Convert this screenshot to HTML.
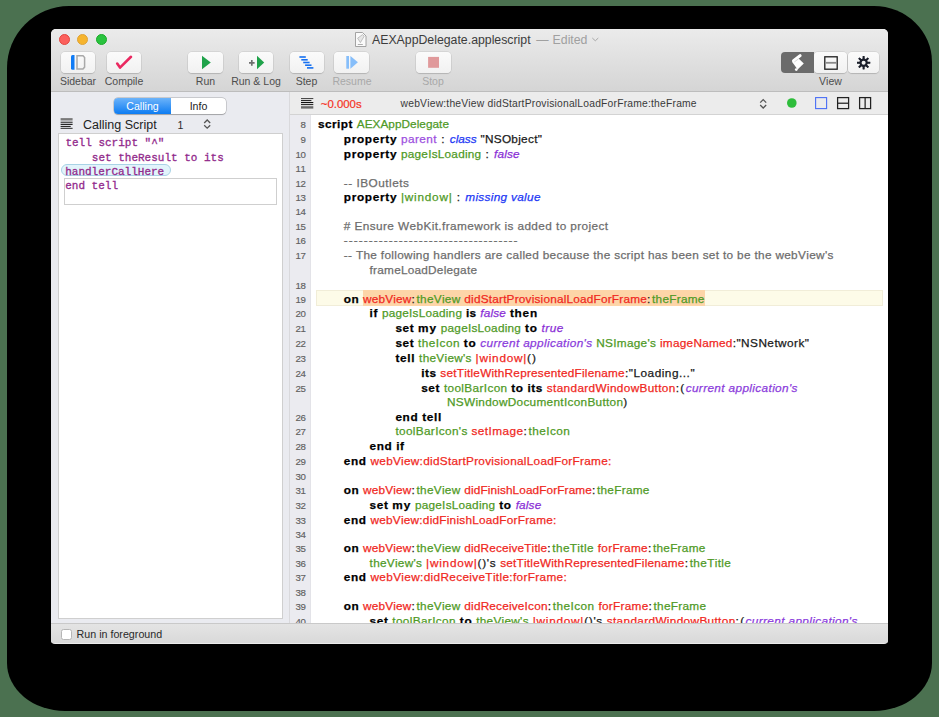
<!DOCTYPE html>
<html><head><meta charset="utf-8"><style>
*{margin:0;padding:0;box-sizing:border-box}
html,body{width:939px;height:717px;overflow:hidden;background:#4b7150;font-family:"Liberation Sans",sans-serif;font-kerning:none}
.abs{position:absolute}
#shadow{position:absolute;left:7px;top:6px;width:925px;height:705px;border-radius:62px 58px 58px 58px / 62px 56px 48px 48px;background:#000}
#win{position:absolute;left:51px;top:29px;width:837px;height:615px;border-radius:5px 5px 4px 4px;overflow:hidden;background:#ececec}
#toolbar{position:absolute;left:0;top:0;width:837px;height:63px;background:linear-gradient(#ebebeb,#d5d5d5);border-bottom:1px solid #bdbdbd}
.light{position:absolute;top:5.1px;width:11px;height:11px;border-radius:50%}
.tb{position:absolute;background:linear-gradient(#fbfbfb,#f1f1f1);border-radius:4px;box-shadow:0 0 0 0.5px rgba(0,0,0,0.12),0 1px 1px rgba(0,0,0,0.12)}
.lbl{position:absolute;width:100px;text-align:center;font-size:10.5px;white-space:nowrap}
#sidebar{position:absolute;left:0;top:63px;width:239px;height:531px;background:#eaebf0;border-right:1px solid #d9d9dc}
#editor{position:absolute;left:239px;top:63px;width:598px;height:531px;background:#fff}
#ehead{position:absolute;left:0;top:0;width:598px;height:23px;background:#ececec;border-bottom:1px solid #d3d3d3}
#gutter{position:absolute;left:0;top:23px;width:21px;height:508px;background:#ebebf0;border-right:1px solid #e3e3e8}
#bottom{position:absolute;left:0;top:594px;width:837px;height:20px;background:linear-gradient(#e4e4e4,#d9d9d9);border-top:1px solid #c9c9c9}
.ct{position:absolute;white-space:pre;font-size:11.8px;line-height:normal;-webkit-text-stroke:0.25px currentColor}
.ln{position:absolute;left:280px;width:25.6px;text-align:right;font-size:9.7px;letter-spacing:-0.3px;color:#606060;line-height:normal;-webkit-text-stroke:0.15px currentColor}
.hl{position:absolute;left:316px;width:566.5px;height:15.8px;background:#fdfbe8;border:1px solid #f1edd8}
.sel{position:absolute;height:15.8px;background:#fdd5a8}
.mono{position:absolute;font-family:"Liberation Mono",monospace;font-size:11px;color:#922a8c;white-space:pre;-webkit-text-stroke:0.3px currentColor}
</style></head><body>
<div id="shadow"></div>
<div id="win">
 <div id="toolbar">
  <div class="light" style="left:8px;background:#fc605c;border:0.5px solid #e2463f"></div>
  <div class="light" style="left:26px;background:#f6b42d;border:0.5px solid #dea236"></div>
  <div class="light" style="left:44.5px;background:#2ac33f;border:0.5px solid #1aab29"></div>
 </div>
 <div id="sidebar"></div>
 <div id="editor"><div id="ehead"></div><div id="gutter"></div></div>
 <div id="bottom"></div>
</div>
<div class="abs" style="left:0;top:0;width:939px;height:717px">
<div class="tb" style="left:61.1px;top:52.4px;width:34.0px;height:20.2px"></div>
<div class="tb" style="left:107.0px;top:52.4px;width:34.4px;height:20.2px"></div>
<div class="tb" style="left:188.4px;top:52.4px;width:34.2px;height:20.2px"></div>
<div class="tb" style="left:239.2px;top:52.4px;width:34.2px;height:20.2px"></div>
<div class="tb" style="left:289.8px;top:52.4px;width:34.0px;height:20.2px"></div>
<div class="tb" style="left:334.4px;top:52.4px;width:34.5px;height:20.2px"></div>
<div class="tb" style="left:415.9px;top:52.4px;width:35.1px;height:20.2px"></div>
<div class="tb" style="left:814.2px;top:51.5px;width:32.5px;height:21.7px"></div>
<div class="tb" style="left:848.2px;top:51.5px;width:30.8px;height:21.7px"></div>
<div class="abs" style="left:781.1px;top:51.5px;width:32.6px;height:21.7px;background:#6b6b6b;border-radius:4px 0 0 4px"></div>
<div class="lbl" style="left:28.0px;top:74.5px;color:#4d4d4d">Sidebar</div>
<div class="lbl" style="left:74.0px;top:74.5px;color:#4d4d4d">Compile</div>
<div class="lbl" style="left:155.5px;top:74.5px;color:#4d4d4d">Run</div>
<div class="lbl" style="left:206.0px;top:74.5px;color:#4d4d4d">Run &amp; Log</div>
<div class="lbl" style="left:256.5px;top:74.5px;color:#4d4d4d">Step</div>
<div class="lbl" style="left:302.0px;top:74.5px;color:#a8a8a8">Resume</div>
<div class="lbl" style="left:383.0px;top:74.5px;color:#a8a8a8">Stop</div>
<div class="lbl" style="left:780.5px;top:74.5px;color:#4d4d4d">View</div>
<div class="abs" style="left:372px;top:32.5px;font-size:12.3px;color:#3c3c3c;white-space:nowrap">AEXAppDelegate.applescript</div>
<div class="abs" style="left:536.2px;top:32.5px;font-size:12.3px;color:#a0a0a0;white-space:nowrap">&mdash;</div>
<div class="abs" style="left:552.6px;top:32.5px;font-size:12.3px;color:#a0a0a0;white-space:nowrap">Edited</div>
<div class="abs" style="left:114px;top:97.6px;width:112.3px;height:16.2px;border-radius:4px;background:#fff;box-shadow:0 0 0 0.5px rgba(0,0,0,0.25),0 0.5px 1px rgba(0,0,0,0.2);overflow:hidden"><div class="abs" style="left:0;top:0;width:57px;height:16.3px;background:linear-gradient(#6cb3fa,#0d7cf2)"></div><div class="abs" style="left:0;top:2.3px;width:57px;text-align:center;font-size:10.6px;color:#fff">Calling</div><div class="abs" style="left:57px;top:2.3px;width:55px;text-align:center;font-size:10.6px;color:#222">Info</div></div>
<div class="abs" style="left:83px;top:118px;font-size:12.5px;color:#222;white-space:nowrap">Calling Script</div>
<div class="abs" style="left:177.4px;top:119px;font-size:10.6px;color:#2a2a2a">1</div>
<div class="abs" style="left:58px;top:133px;width:225px;height:486px;background:#fff;border:1px solid #cfcfcf"></div>
<div class="abs" style="left:60.7px;top:164.2px;width:110.6px;height:12.3px;border-radius:6px;background:#e2f4fb;border:1px solid #a9d3e6"></div>
<div class="abs" style="left:63.7px;top:178px;width:213.5px;height:26.5px;border:1px solid #cfcfcf"></div>
<div class="mono" style="left:65.4px;top:137.0px">tell script &quot;^&quot;</div>
<div class="mono" style="left:65.4px;top:151.6px">    set theResult to its</div>
<div class="mono" style="left:65.2px;top:165.6px">handlerCallHere</div>
<div class="mono" style="left:65.2px;top:179.9px">end tell</div>
<div class="abs" style="left:61px;top:629px;width:10.5px;height:10.5px;border-radius:2.5px;background:#fff;border:1px solid #b5b5b5"></div>
<div class="abs" style="left:76.6px;top:628px;font-size:10.7px;color:#2a2a2a;white-space:nowrap">Run in foreground</div>
<div class="abs" style="left:320.8px;top:97.8px;font-size:11.4px;color:#f5321f;-webkit-text-stroke:0.2px currentColor;white-space:nowrap">~0.000s</div>
<div class="abs" style="left:400.6px;top:98.2px;font-size:10.3px;letter-spacing:0.21px;color:#3a3a3a;white-space:nowrap">webView:theView didStartProvisionalLoadForFrame:theFrame</div>
<svg class="abs" style="left:0;top:0" width="939" height="717" viewBox="0 0 939 717"><path d="M74.5,55 L72.5,55 Q71,55 71,56.5 L71,68.2 Q71,69.7 72.5,69.7 L74.5,69.7 Z" fill="#0f7bf5"/><path d="M77,55.8 L83,55.8 L84.6,57.6 L84.6,67.1 L83,68.9 L77,68.9 Z" fill="none" stroke="#a9a9a9" stroke-width="1.5"/><path d="M117.2,63.6 L120,67.6 L131,56.8" fill="none" stroke="#ea2860" stroke-width="2.6" stroke-linecap="round" stroke-linejoin="round"/><path d="M202,55.8 L210.8,62.5 L202,69.2 Z" fill="#1fa24a"/><path d="M249,62.9 H254.6 M251.8,60 V65.8" stroke="#6f6f6f" stroke-width="1.7"/><path d="M257,55.8 L264.2,62.5 L257,69.2 Z" fill="#1fa24a"/><rect x="299.4" y="56.2" width="6.4" height="1.6" fill="#1670f0"/><rect x="301.3" y="59.0" width="6.4" height="1.6" fill="#1670f0"/><rect x="303.2" y="61.7" width="6.4" height="1.6" fill="#1670f0"/><rect x="305.1" y="64.4" width="6.4" height="1.6" fill="#1670f0"/><rect x="307.0" y="67.1" width="6.4" height="1.6" fill="#1670f0"/><rect x="346.3" y="56" width="2.7" height="12.7" fill="#86befa"/><path d="M350.4,56 L357.9,62.3 L350.4,68.7 Z" fill="#86befa"/><rect x="428.1" y="56.9" width="10.9" height="10.9" fill="#e0999b"/><path d="M792.0,61.7 L797.6,57.4 L803.8,63.5 L797.6,69.6 Z" fill="#fff"/><path d="M793.6,60.8 L800.1,55.6" stroke="#fff" stroke-width="3.1" stroke-linecap="round"/><path d="M794.4,61.9 L798.6,58.8" stroke="#bdbdbd" stroke-width="0.6"/><circle cx="796.3" cy="69.6" r="1.4" fill="#fff"/><rect x="824.8" y="56.8" width="12.4" height="12.4" fill="none" stroke="#1e1e1e" stroke-width="1.3"/><rect x="825.6" y="61.9" width="10.8" height="1.8" fill="#8a8a8a"/><rect x="862.75" y="56.10" width="1.7" height="13.2" fill="#1b1f2b" transform="rotate(0.0 863.60 62.70)"/><rect x="862.75" y="56.10" width="1.7" height="13.2" fill="#1b1f2b" transform="rotate(45.0 863.60 62.70)"/><rect x="862.75" y="56.10" width="1.7" height="13.2" fill="#1b1f2b" transform="rotate(90.0 863.60 62.70)"/><rect x="862.75" y="56.10" width="1.7" height="13.2" fill="#1b1f2b" transform="rotate(135.0 863.60 62.70)"/><rect x="862.75" y="56.10" width="1.7" height="13.2" fill="#1b1f2b" transform="rotate(180.0 863.60 62.70)"/><rect x="862.75" y="56.10" width="1.7" height="13.2" fill="#1b1f2b" transform="rotate(225.0 863.60 62.70)"/><rect x="862.75" y="56.10" width="1.7" height="13.2" fill="#1b1f2b" transform="rotate(270.0 863.60 62.70)"/><rect x="862.75" y="56.10" width="1.7" height="13.2" fill="#1b1f2b" transform="rotate(315.0 863.60 62.70)"/><circle cx="863.60" cy="62.70" r="3.1" fill="none" stroke="#1b1f2b" stroke-width="2.2"/><circle cx="863.60" cy="62.70" r="2" fill="#f4f4f4"/><rect x="301.0" y="98.0" width="12.3" height="1.1" fill="#4a4a4a"/><rect x="301.0" y="100.0" width="10.4" height="1.1" fill="#2a2a2a"/><rect x="301.0" y="102.0" width="12.3" height="1.1" fill="#111"/><rect x="301.0" y="104.0" width="12.3" height="1.1" fill="#2f2f2f"/><rect x="301.0" y="106.2" width="12.3" height="2.4" fill="#6a6a6a"/><rect x="60.6" y="118.1" width="12.0" height="2.4" fill="#7a7a7a"/><rect x="60.6" y="121.7" width="12.0" height="1.1" fill="#2f2f2f"/><rect x="60.6" y="123.8" width="12.0" height="1.1" fill="#111"/><rect x="60.6" y="125.9" width="10.1" height="1.1" fill="#2a2a2a"/><rect x="60.6" y="127.8" width="12.0" height="1.1" fill="#3a3a3a"/><path d="M204.2,123 L207.2,120 L210.2,123 M204.2,125.2 L207.2,128.2 L210.2,125.2" fill="none" stroke="#555" stroke-width="1.3"/><path d="M760.2,102.6 L763.2,99.6 L766.2,102.6 M760.2,105 L763.2,108 L766.2,105" fill="none" stroke="#555" stroke-width="1.3"/><path d="M355.5,32.5 L362.5,32.5 L366,36 L366,46.5 L355.5,46.5 Z" fill="#fafafa" stroke="#9a9a9a" stroke-width="0.9"/><path d="M357.6,38.2 L362.6,34.6 L364.2,36.2 L360.4,42.6 Z" fill="#e6e6e6" stroke="#aaaaaa" stroke-width="0.7"/><rect x="357.8" y="44.2" width="5" height="0.8" fill="#9a9a9a"/><path d="M592.3,38 L595.3,40.8 L598.3,38" fill="none" stroke="#a8a8a8" stroke-width="1"/><circle cx="791.8" cy="103" r="4.8" fill="#2ebd3b"/><rect x="815.6" y="97.6" width="11" height="11" fill="none" stroke="#4a6ef5" stroke-width="1.1"/><rect x="837.6" y="97.6" width="11" height="11" fill="none" stroke="#222" stroke-width="1.25"/><rect x="837.6" y="102.6" width="11" height="1.25" fill="#222"/><rect x="859.6" y="97.6" width="11" height="11" fill="none" stroke="#222" stroke-width="1.25"/><rect x="864.5" y="97.6" width="1.25" height="11" fill="#222"/></svg>
<div class="abs" style="left:290px;top:115px;width:596px;height:507.5px;overflow:hidden"><div class="abs" style="left:-290px;top:-115px;width:939px;height:717px">
<div class="ln" style="top:119.20px">8</div>
<div class="ln" style="top:134.20px">9</div>
<div class="ln" style="top:149.20px">10</div>
<div class="ln" style="top:163.20px">11</div>
<div class="ln" style="top:178.20px">12</div>
<div class="ln" style="top:192.20px">13</div>
<div class="ln" style="top:206.20px">14</div>
<div class="ln" style="top:221.20px">15</div>
<div class="ln" style="top:235.20px">16</div>
<div class="ln" style="top:250.20px">17</div>
<div class="ln" style="top:280.20px">18</div>
<div class="ln" style="top:294.20px">19</div>
<div class="ln" style="top:308.20px">20</div>
<div class="ln" style="top:323.20px">21</div>
<div class="ln" style="top:338.20px">22</div>
<div class="ln" style="top:353.20px">23</div>
<div class="ln" style="top:368.20px">24</div>
<div class="ln" style="top:383.20px">25</div>
<div class="ln" style="top:412.20px">26</div>
<div class="ln" style="top:426.20px">27</div>
<div class="ln" style="top:441.20px">28</div>
<div class="ln" style="top:456.20px">29</div>
<div class="ln" style="top:471.20px">30</div>
<div class="ln" style="top:485.20px">31</div>
<div class="ln" style="top:500.20px">32</div>
<div class="ln" style="top:515.20px">33</div>
<div class="ln" style="top:529.20px">34</div>
<div class="ln" style="top:543.20px">35</div>
<div class="ln" style="top:558.20px">36</div>
<div class="ln" style="top:572.20px">37</div>
<div class="ln" style="top:587.20px">38</div>
<div class="ln" style="top:601.20px">39</div>
<div class="ln" style="top:616.20px">40</div>
<span class="ct" style="left:318.00px;top:117.00px;color:#000000;letter-spacing:0.465px;font-weight:bold">script</span>
<span class="ct" style="left:352.93px;top:117.00px;color:#1a1a1a;letter-spacing:0.594px"> </span>
<span class="ct" style="left:356.80px;top:117.00px;color:#4f9a26;letter-spacing:0.026px">AEXAppDelegate</span>
<span class="ct" style="left:343.80px;top:132.00px;color:#000000;letter-spacing:0.686px;font-weight:bold">property</span>
<span class="ct" style="left:397.15px;top:132.00px;color:#1a1a1a;letter-spacing:0.594px"> </span>
<span class="ct" style="left:401.02px;top:132.00px;color:#9d4fe0;letter-spacing:0.426px">parent</span>
<span class="ct" style="left:437.04px;top:132.00px;color:#1a1a1a;letter-spacing:0.968px"> : </span>
<span class="ct" style="left:449.77px;top:132.00px;color:#2238f5;letter-spacing:-0.013px;font-style:italic">class</span>
<span class="ct" style="left:476.59px;top:132.00px;color:#1a1a1a;letter-spacing:0.594px"> </span>
<span class="ct" style="left:480.46px;top:132.00px;color:#1a1a1a;letter-spacing:0.289px">&quot;NSObject&quot;</span>
<span class="ct" style="left:343.80px;top:147.00px;color:#000000;letter-spacing:0.686px;font-weight:bold">property</span>
<span class="ct" style="left:397.15px;top:147.00px;color:#1a1a1a;letter-spacing:0.594px"> </span>
<span class="ct" style="left:401.02px;top:147.00px;color:#4f9a26;letter-spacing:0.224px">pageIsLoading</span>
<span class="ct" style="left:481.36px;top:147.00px;color:#1a1a1a;letter-spacing:0.968px"> : </span>
<span class="ct" style="left:494.09px;top:147.00px;color:#8a2fd6;letter-spacing:0.172px;font-style:italic">false</span>
<span class="ct" style="left:343.80px;top:176.00px;color:#6d6d6d;letter-spacing:0.496px">-- IBOutlets</span>
<span class="ct" style="left:343.80px;top:190.00px;color:#000000;letter-spacing:0.686px;font-weight:bold">property</span>
<span class="ct" style="left:397.15px;top:190.00px;color:#1a1a1a;letter-spacing:0.594px"> </span>
<span class="ct" style="left:401.02px;top:190.00px;color:#4f9a26;letter-spacing:0.751px">|window|</span>
<span class="ct" style="left:452.51px;top:190.00px;color:#1a1a1a;letter-spacing:0.968px"> : </span>
<span class="ct" style="left:465.25px;top:190.00px;color:#2238f5;letter-spacing:0.312px;font-style:italic">missing value</span>
<span class="ct" style="left:343.80px;top:219.00px;color:#6d6d6d;letter-spacing:0.404px"># Ensure WebKit.framework is added to project</span>
<span class="ct" style="left:343.80px;top:233.00px;color:#6d6d6d;letter-spacing:1.065px">-----------------------------------</span>
<span class="ct" style="left:343.80px;top:248.00px;color:#6d6d6d;letter-spacing:0.325px">-- The following handlers are called because the script has been set to be the webView&#x27;s</span>
<span class="ct" style="left:369.60px;top:263.00px;color:#6d6d6d;letter-spacing:0.236px">frameLoadDelegate</span>
<div class="hl" style="top:289.80px"></div>
<div class="sel" style="top:289.80px;left:363.06px;width:341.67px"></div>
<span class="ct" style="left:343.80px;top:292.00px;color:#000000;letter-spacing:0.487px;font-weight:bold">on</span>
<span class="ct" style="left:359.19px;top:292.00px;color:#1a1a1a;letter-spacing:0.594px"> </span>
<span class="ct" style="left:363.06px;top:292.00px;color:#f0281e;letter-spacing:0.182px">webView</span>
<span class="ct" style="left:411.56px;top:292.00px;color:#1a1a1a;letter-spacing:1.716px">:</span>
<span class="ct" style="left:416.55px;top:292.00px;color:#4f9a26;letter-spacing:0.281px">theView</span>
<span class="ct" style="left:460.50px;top:292.00px;color:#1a1a1a;letter-spacing:0.594px"> </span>
<span class="ct" style="left:464.37px;top:292.00px;color:#f0281e;letter-spacing:0.200px">didStartProvisionalLoadForFrame</span>
<span class="ct" style="left:646.99px;top:292.00px;color:#1a1a1a;letter-spacing:1.716px">:</span>
<span class="ct" style="left:651.99px;top:292.00px;color:#4f9a26;letter-spacing:0.281px">theFrame</span>
<span class="ct" style="left:369.60px;top:306.00px;color:#000000;letter-spacing:0.598px;font-weight:bold">if</span>
<span class="ct" style="left:378.00px;top:306.00px;color:#1a1a1a;letter-spacing:0.594px"> </span>
<span class="ct" style="left:381.88px;top:306.00px;color:#4f9a26;letter-spacing:0.224px">pageIsLoading</span>
<span class="ct" style="left:462.21px;top:306.00px;color:#1a1a1a;letter-spacing:0.594px"> </span>
<span class="ct" style="left:466.08px;top:306.00px;color:#000000;letter-spacing:0.222px;font-weight:bold">is</span>
<span class="ct" style="left:476.37px;top:306.00px;color:#1a1a1a;letter-spacing:0.594px"> </span>
<span class="ct" style="left:480.24px;top:306.00px;color:#8a2fd6;letter-spacing:0.172px;font-style:italic">false</span>
<span class="ct" style="left:506.02px;top:306.00px;color:#1a1a1a;letter-spacing:0.594px"> </span>
<span class="ct" style="left:509.89px;top:306.00px;color:#000000;letter-spacing:0.769px;font-weight:bold">then</span>
<span class="ct" style="left:395.40px;top:321.00px;color:#000000;letter-spacing:0.596px;font-weight:bold">set</span>
<span class="ct" style="left:414.24px;top:321.00px;color:#1a1a1a;letter-spacing:0.594px"> </span>
<span class="ct" style="left:418.12px;top:321.00px;color:#000000;letter-spacing:0.872px;font-weight:bold">my</span>
<span class="ct" style="left:436.91px;top:321.00px;color:#1a1a1a;letter-spacing:0.594px"> </span>
<span class="ct" style="left:440.79px;top:321.00px;color:#4f9a26;letter-spacing:0.224px">pageIsLoading</span>
<span class="ct" style="left:521.12px;top:321.00px;color:#1a1a1a;letter-spacing:0.594px"> </span>
<span class="ct" style="left:524.99px;top:321.00px;color:#000000;letter-spacing:0.718px;font-weight:bold">to</span>
<span class="ct" style="left:537.56px;top:321.00px;color:#1a1a1a;letter-spacing:0.594px"> </span>
<span class="ct" style="left:541.44px;top:321.00px;color:#8a2fd6;letter-spacing:0.554px;font-style:italic">true</span>
<span class="ct" style="left:395.40px;top:336.00px;color:#000000;letter-spacing:0.596px;font-weight:bold">set</span>
<span class="ct" style="left:414.24px;top:336.00px;color:#1a1a1a;letter-spacing:0.594px"> </span>
<span class="ct" style="left:418.12px;top:336.00px;color:#4f9a26;letter-spacing:0.450px">theIcon</span>
<span class="ct" style="left:459.97px;top:336.00px;color:#1a1a1a;letter-spacing:0.594px"> </span>
<span class="ct" style="left:463.84px;top:336.00px;color:#000000;letter-spacing:0.718px;font-weight:bold">to</span>
<span class="ct" style="left:476.42px;top:336.00px;color:#1a1a1a;letter-spacing:0.594px"> </span>
<span class="ct" style="left:480.29px;top:336.00px;color:#8b3cdc;letter-spacing:0.362px;font-style:italic">current application&#x27;s</span>
<span class="ct" style="left:592.47px;top:336.00px;color:#1a1a1a;letter-spacing:0.594px"> </span>
<span class="ct" style="left:596.34px;top:336.00px;color:#4f9a26;letter-spacing:0.273px">NSImage&#x27;s</span>
<span class="ct" style="left:656.13px;top:336.00px;color:#1a1a1a;letter-spacing:0.594px"> </span>
<span class="ct" style="left:660.00px;top:336.00px;color:#f0281e;letter-spacing:0.251px">imageNamed</span>
<span class="ct" style="left:732.69px;top:336.00px;color:#1a1a1a;letter-spacing:0.460px">:&quot;NSNetwork&quot;</span>
<span class="ct" style="left:395.40px;top:351.00px;color:#000000;letter-spacing:0.699px;font-weight:bold">tell</span>
<span class="ct" style="left:415.24px;top:351.00px;color:#1a1a1a;letter-spacing:0.594px"> </span>
<span class="ct" style="left:419.12px;top:351.00px;color:#4f9a26;letter-spacing:0.278px">theView&#x27;s</span>
<span class="ct" style="left:471.75px;top:351.00px;color:#1a1a1a;letter-spacing:0.594px"> </span>
<span class="ct" style="left:475.62px;top:351.00px;color:#f0281e;letter-spacing:0.751px">|window|</span>
<span class="ct" style="left:527.11px;top:351.00px;color:#1a1a1a;letter-spacing:1.065px">()</span>
<span class="ct" style="left:421.20px;top:366.00px;color:#000000;letter-spacing:0.510px;font-weight:bold">its</span>
<span class="ct" style="left:436.50px;top:366.00px;color:#1a1a1a;letter-spacing:0.594px"> </span>
<span class="ct" style="left:440.37px;top:366.00px;color:#f0281e;letter-spacing:0.220px">setTitleWithRepresentedFilename</span>
<span class="ct" style="left:624.92px;top:366.00px;color:#1a1a1a;letter-spacing:0.516px">:&quot;Loading...&quot;</span>
<span class="ct" style="left:421.20px;top:381.00px;color:#000000;letter-spacing:0.596px;font-weight:bold">set</span>
<span class="ct" style="left:440.04px;top:381.00px;color:#1a1a1a;letter-spacing:0.594px"> </span>
<span class="ct" style="left:443.92px;top:381.00px;color:#4f9a26;letter-spacing:0.352px">toolBarIcon</span>
<span class="ct" style="left:507.47px;top:381.00px;color:#1a1a1a;letter-spacing:0.594px"> </span>
<span class="ct" style="left:511.35px;top:381.00px;color:#000000;letter-spacing:0.575px;font-weight:bold">to its</span>
<span class="ct" style="left:542.98px;top:381.00px;color:#1a1a1a;letter-spacing:0.594px"> </span>
<span class="ct" style="left:546.85px;top:381.00px;color:#f0281e;letter-spacing:0.342px">standardWindowButton</span>
<span class="ct" style="left:675.71px;top:381.00px;color:#1a1a1a;letter-spacing:1.390px">:(</span>
<span class="ct" style="left:685.69px;top:381.00px;color:#8b3cdc;letter-spacing:0.362px;font-style:italic">current application&#x27;s</span>
<span class="ct" style="left:447.00px;top:395.00px;color:#4f9a26;letter-spacing:0.300px">NSWindowDocumentIconButton</span>
<span class="ct" style="left:623.36px;top:395.00px;color:#1a1a1a;letter-spacing:1.065px">)</span>
<span class="ct" style="left:395.40px;top:410.00px;color:#000000;letter-spacing:0.641px;font-weight:bold">end tell</span>
<span class="ct" style="left:395.40px;top:424.00px;color:#4f9a26;letter-spacing:0.339px">toolBarIcon&#x27;s</span>
<span class="ct" style="left:467.65px;top:424.00px;color:#1a1a1a;letter-spacing:0.594px"> </span>
<span class="ct" style="left:471.52px;top:424.00px;color:#f0281e;letter-spacing:0.430px">setImage</span>
<span class="ct" style="left:523.50px;top:424.00px;color:#1a1a1a;letter-spacing:1.716px">:</span>
<span class="ct" style="left:528.49px;top:424.00px;color:#4f9a26;letter-spacing:0.450px">theIcon</span>
<span class="ct" style="left:369.60px;top:439.00px;color:#000000;letter-spacing:0.588px;font-weight:bold">end if</span>
<span class="ct" style="left:343.80px;top:454.00px;color:#000000;letter-spacing:0.616px;font-weight:bold">end</span>
<span class="ct" style="left:366.62px;top:454.00px;color:#1a1a1a;letter-spacing:0.594px"> </span>
<span class="ct" style="left:370.50px;top:454.00px;color:#f0281e;letter-spacing:0.273px">webView:didStartProvisionalLoadForFrame:</span>
<span class="ct" style="left:343.80px;top:483.00px;color:#000000;letter-spacing:0.487px;font-weight:bold">on</span>
<span class="ct" style="left:359.19px;top:483.00px;color:#1a1a1a;letter-spacing:0.594px"> </span>
<span class="ct" style="left:363.06px;top:483.00px;color:#f0281e;letter-spacing:0.182px">webView</span>
<span class="ct" style="left:411.56px;top:483.00px;color:#1a1a1a;letter-spacing:1.716px">:</span>
<span class="ct" style="left:416.55px;top:483.00px;color:#4f9a26;letter-spacing:0.281px">theView</span>
<span class="ct" style="left:460.50px;top:483.00px;color:#1a1a1a;letter-spacing:0.594px"> </span>
<span class="ct" style="left:464.37px;top:483.00px;color:#f0281e;letter-spacing:0.111px">didFinishLoadForFrame</span>
<span class="ct" style="left:591.96px;top:483.00px;color:#1a1a1a;letter-spacing:1.716px">:</span>
<span class="ct" style="left:596.95px;top:483.00px;color:#4f9a26;letter-spacing:0.281px">theFrame</span>
<span class="ct" style="left:369.60px;top:498.00px;color:#000000;letter-spacing:0.596px;font-weight:bold">set</span>
<span class="ct" style="left:388.44px;top:498.00px;color:#1a1a1a;letter-spacing:0.594px"> </span>
<span class="ct" style="left:392.32px;top:498.00px;color:#000000;letter-spacing:0.872px;font-weight:bold">my</span>
<span class="ct" style="left:411.11px;top:498.00px;color:#1a1a1a;letter-spacing:0.594px"> </span>
<span class="ct" style="left:414.99px;top:498.00px;color:#4f9a26;letter-spacing:0.224px">pageIsLoading</span>
<span class="ct" style="left:495.32px;top:498.00px;color:#1a1a1a;letter-spacing:0.594px"> </span>
<span class="ct" style="left:499.19px;top:498.00px;color:#000000;letter-spacing:0.718px;font-weight:bold">to</span>
<span class="ct" style="left:511.76px;top:498.00px;color:#1a1a1a;letter-spacing:0.594px"> </span>
<span class="ct" style="left:515.64px;top:498.00px;color:#8a2fd6;letter-spacing:0.172px;font-style:italic">false</span>
<span class="ct" style="left:343.80px;top:513.00px;color:#000000;letter-spacing:0.616px;font-weight:bold">end</span>
<span class="ct" style="left:366.62px;top:513.00px;color:#1a1a1a;letter-spacing:0.594px"> </span>
<span class="ct" style="left:370.50px;top:513.00px;color:#f0281e;letter-spacing:0.234px">webView:didFinishLoadForFrame:</span>
<span class="ct" style="left:343.80px;top:541.00px;color:#000000;letter-spacing:0.487px;font-weight:bold">on</span>
<span class="ct" style="left:359.19px;top:541.00px;color:#1a1a1a;letter-spacing:0.594px"> </span>
<span class="ct" style="left:363.06px;top:541.00px;color:#f0281e;letter-spacing:0.182px">webView</span>
<span class="ct" style="left:411.56px;top:541.00px;color:#1a1a1a;letter-spacing:1.716px">:</span>
<span class="ct" style="left:416.55px;top:541.00px;color:#4f9a26;letter-spacing:0.281px">theView</span>
<span class="ct" style="left:460.50px;top:541.00px;color:#1a1a1a;letter-spacing:0.594px"> </span>
<span class="ct" style="left:464.37px;top:541.00px;color:#f0281e;letter-spacing:0.154px">didReceiveTitle</span>
<span class="ct" style="left:547.36px;top:541.00px;color:#1a1a1a;letter-spacing:1.716px">:</span>
<span class="ct" style="left:552.35px;top:541.00px;color:#4f9a26;letter-spacing:0.356px">theTitle</span>
<span class="ct" style="left:593.90px;top:541.00px;color:#1a1a1a;letter-spacing:0.594px"> </span>
<span class="ct" style="left:597.77px;top:541.00px;color:#f0281e;letter-spacing:0.284px">forFrame</span>
<span class="ct" style="left:647.91px;top:541.00px;color:#1a1a1a;letter-spacing:1.716px">:</span>
<span class="ct" style="left:652.90px;top:541.00px;color:#4f9a26;letter-spacing:0.281px">theFrame</span>
<span class="ct" style="left:369.60px;top:556.00px;color:#4f9a26;letter-spacing:0.278px">theView&#x27;s</span>
<span class="ct" style="left:422.24px;top:556.00px;color:#1a1a1a;letter-spacing:0.594px"> </span>
<span class="ct" style="left:426.11px;top:556.00px;color:#f0281e;letter-spacing:0.751px">|window|</span>
<span class="ct" style="left:477.60px;top:556.00px;color:#1a1a1a;letter-spacing:0.667px">()&#x27;s</span>
<span class="ct" style="left:496.28px;top:556.00px;color:#1a1a1a;letter-spacing:0.594px"> </span>
<span class="ct" style="left:500.15px;top:556.00px;color:#f0281e;letter-spacing:0.220px">setTitleWithRepresentedFilename</span>
<span class="ct" style="left:684.70px;top:556.00px;color:#1a1a1a;letter-spacing:1.716px">:</span>
<span class="ct" style="left:689.69px;top:556.00px;color:#4f9a26;letter-spacing:0.356px">theTitle</span>
<span class="ct" style="left:343.80px;top:570.00px;color:#000000;letter-spacing:0.616px;font-weight:bold">end</span>
<span class="ct" style="left:366.62px;top:570.00px;color:#1a1a1a;letter-spacing:0.594px"> </span>
<span class="ct" style="left:370.50px;top:570.00px;color:#f0281e;letter-spacing:0.334px">webView:didReceiveTitle:forFrame:</span>
<span class="ct" style="left:343.80px;top:599.00px;color:#000000;letter-spacing:0.487px;font-weight:bold">on</span>
<span class="ct" style="left:359.19px;top:599.00px;color:#1a1a1a;letter-spacing:0.594px"> </span>
<span class="ct" style="left:363.06px;top:599.00px;color:#f0281e;letter-spacing:0.182px">webView</span>
<span class="ct" style="left:411.56px;top:599.00px;color:#1a1a1a;letter-spacing:1.716px">:</span>
<span class="ct" style="left:416.55px;top:599.00px;color:#4f9a26;letter-spacing:0.281px">theView</span>
<span class="ct" style="left:460.50px;top:599.00px;color:#1a1a1a;letter-spacing:0.594px"> </span>
<span class="ct" style="left:464.37px;top:599.00px;color:#f0281e;letter-spacing:0.186px">didReceiveIcon</span>
<span class="ct" style="left:547.66px;top:599.00px;color:#1a1a1a;letter-spacing:1.716px">:</span>
<span class="ct" style="left:552.66px;top:599.00px;color:#4f9a26;letter-spacing:0.450px">theIcon</span>
<span class="ct" style="left:594.51px;top:599.00px;color:#1a1a1a;letter-spacing:0.594px"> </span>
<span class="ct" style="left:598.38px;top:599.00px;color:#f0281e;letter-spacing:0.284px">forFrame</span>
<span class="ct" style="left:648.52px;top:599.00px;color:#1a1a1a;letter-spacing:1.716px">:</span>
<span class="ct" style="left:653.52px;top:599.00px;color:#4f9a26;letter-spacing:0.281px">theFrame</span>
<span class="ct" style="left:369.60px;top:614.00px;color:#000000;letter-spacing:0.596px;font-weight:bold">set</span>
<span class="ct" style="left:388.44px;top:614.00px;color:#1a1a1a;letter-spacing:0.594px"> </span>
<span class="ct" style="left:392.32px;top:614.00px;color:#4f9a26;letter-spacing:0.352px">toolBarIcon</span>
<span class="ct" style="left:455.87px;top:614.00px;color:#1a1a1a;letter-spacing:0.594px"> </span>
<span class="ct" style="left:459.75px;top:614.00px;color:#000000;letter-spacing:0.718px;font-weight:bold">to</span>
<span class="ct" style="left:472.32px;top:614.00px;color:#1a1a1a;letter-spacing:0.594px"> </span>
<span class="ct" style="left:476.19px;top:614.00px;color:#4f9a26;letter-spacing:0.278px">theView&#x27;s</span>
<span class="ct" style="left:528.83px;top:614.00px;color:#1a1a1a;letter-spacing:0.594px"> </span>
<span class="ct" style="left:532.70px;top:614.00px;color:#f0281e;letter-spacing:0.751px">|window|</span>
<span class="ct" style="left:584.19px;top:614.00px;color:#1a1a1a;letter-spacing:0.667px">()&#x27;s</span>
<span class="ct" style="left:602.87px;top:614.00px;color:#1a1a1a;letter-spacing:0.594px"> </span>
<span class="ct" style="left:606.74px;top:614.00px;color:#f0281e;letter-spacing:0.342px">standardWindowButton</span>
<span class="ct" style="left:735.59px;top:614.00px;color:#1a1a1a;letter-spacing:1.390px">:(</span>
<span class="ct" style="left:745.58px;top:614.00px;color:#8b3cdc;letter-spacing:0.362px;font-style:italic">current application&#x27;s</span>
</div></div>
</div>
</body></html>
